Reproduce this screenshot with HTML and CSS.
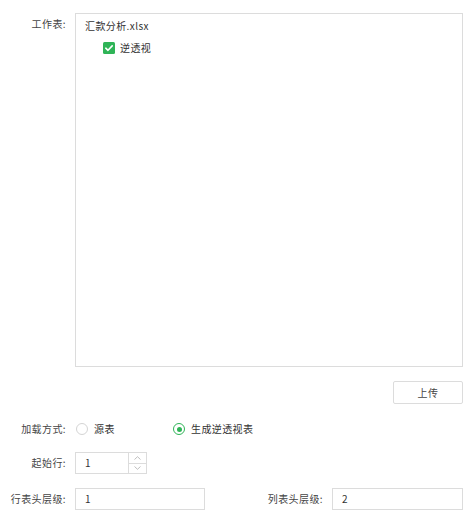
FILE: index.html
```html
<!DOCTYPE html>
<html lang="zh">
<head>
<meta charset="utf-8">
<link rel="stylesheet" href="styles.css">
</head>
<body>
<div class="page">
  <div class="row row-sheet">
    <div class="label">工作表:</div>
    <div class="sheet-box">
      <div class="file">汇款分析.xlsx</div>
      <div class="tree-item">
        <span class="checkbox">
          <svg width="12" height="12" viewBox="0 0 12 12"><rect width="12" height="12" rx="1.5" fill="#2fb457"/><path d="M2.8 6.2 L5 8.3 L9.2 3.9" fill="none" stroke="#fff" stroke-width="1.6" stroke-linecap="round" stroke-linejoin="round"/></svg>
        </span>
        <span class="tree-text">逆透视</span>
      </div>
    </div>
  </div>
  <div class="upload-row">
    <button class="btn">上传</button>
  </div>
  <div class="row row-mode">
    <div class="label">加载方式:</div>
    <div class="radios">
      <label class="radio first"><span class="circle"></span><span>源表</span></label>
      <label class="radio"><span class="circle on"><span class="dot"></span></span><span>生成逆透视表</span></label>
    </div>
  </div>
  <div class="row row-start">
    <div class="label">起始行:</div>
    <div class="spinner">
      <div class="spin-value">1</div>
      <div class="spin-btns">
        <div class="spin-btn"><svg width="7" height="4" viewBox="0 0 7 4"><path d="M0.5 3.5 L3.5 0.7 L6.5 3.5" fill="none" stroke="#b8b8b8" stroke-width="0.9"/></svg></div>
        <div class="spin-btn"><svg width="7" height="4" viewBox="0 0 7 4"><path d="M0.5 0.5 L3.5 3.3 L6.5 0.5" fill="none" stroke="#b8b8b8" stroke-width="0.9"/></svg></div>
      </div>
    </div>
  </div>
  <div class="row row-levels">
    <div class="label">行表头层级:</div>
    <div class="input">1</div>
    <div class="label">列表头层级:</div>
    <div class="input">2</div>
  </div>
</div>
</body>
</html>
```

FILE: styles.css
```css
* { box-sizing: border-box; }
html, body { margin: 0; padding: 0; background: #fff; }
body {
  font-family: "Noto Sans CJK SC", "Noto Sans", sans-serif;
  font-size: 10px;
  color: #333;
  letter-spacing: 0.4px;
}
.page {
  width: 474px;
  padding: 13px 11px 0 7px;
}
.row {
  display: grid;
  grid-template-columns: 59px 1fr;
  column-gap: 9px;
}
.label {
  text-align: right;
  color: #444;
  line-height: 14px;
  white-space: nowrap;
}
.row-sheet .label { padding-top: 4px; }
.sheet-box {
  height: 354px;
  border: 1px solid #dcdcdc;
  padding: 5px 9px;
}
.file { line-height: 14px; color: #333; }
.tree-item {
  margin-top: 8px;
  margin-left: 18px;
  display: flex;
  align-items: center;
  gap: 5px;
  line-height: 14px;
}
.checkbox { display: flex; width: 12px; height: 12px; }
.upload-row {
  display: flex;
  justify-content: flex-end;
  margin-top: 14px;
}
.btn {
  width: 70px;
  height: 23px;
  border: 1px solid #dcdcdc;
  background: #fff;
  border-radius: 2px;
  font-family: inherit;
  font-size: 10px;
  letter-spacing: 0.4px;
  color: #444;
  padding: 0;
}
.row-mode {
  margin-top: 15px;
  height: 20px;
  align-items: center;
}
.radios { display: flex; align-items: center; }
.radio {
  display: flex;
  align-items: center;
  gap: 6px;
  line-height: 14px;
  color: #333;
}
.radio.first { width: 98px; padding-left: 1px; }
.circle {
  width: 12px;
  height: 12px;
  border-radius: 50%;
  border: 1px solid #d4d4d4;
  display: flex;
  align-items: center;
  justify-content: center;
}
.circle.on { border-color: #2fb457; }
.dot { width: 5px; height: 5px; border-radius: 50%; background: #2fb457; }
.row-start {
  margin-top: 13px;
  align-items: center;
}
.spinner {
  width: 72px;
  height: 22px;
  border: 1px solid #dcdcdc;
  display: flex;
}
.spin-value {
  flex: 1;
  padding-left: 9px;
  line-height: 20px;
}
.spin-btns {
  width: 18px;
  border-left: 1px solid #dcdcdc;
  display: flex;
  flex-direction: column;
}
.spin-btn {
  flex: 1;
  display: flex;
  align-items: center;
  justify-content: center;
}
.spin-btn + .spin-btn { border-top: 1px solid #dcdcdc; }
.row-levels {
  margin-top: 14px;
  grid-template-columns: 59px 130px 1fr 131px;
  align-items: center;
}
.input {
  height: 22px;
  border: 1px solid #dcdcdc;
  padding-left: 9px;
  line-height: 20px;
  color: #333;
}
```
